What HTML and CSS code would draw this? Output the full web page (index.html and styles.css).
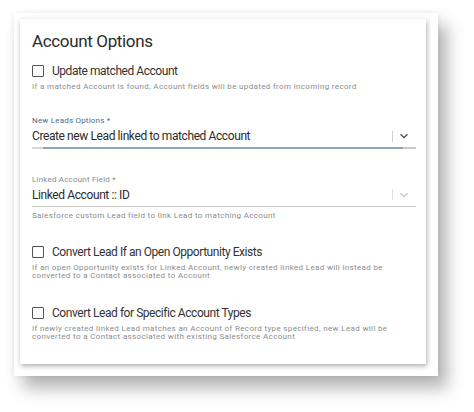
FILE: index.html
```html
<!DOCTYPE html>
<html>
<head>
<meta charset="utf-8">
<link rel="stylesheet" href="styles.css">
</head>
<body>
<div class="frame">
  <div class="card">
    <h1 class="title">Account Options</h1>

    <div class="check-row row-1">
      <span class="box"></span>
      <span class="check-label">Update matched Account</span>
    </div>
    <div class="help help-1">If a matched Account is found, Account fields will be updated from incoming record</div>

    <div class="field field-1 focused">
      <div class="field-label">New Leads Options *</div>
      <div class="field-control">
        <span class="field-value">Create new Lead linked to matched Account</span>
        <span class="sep"></span>
        <svg class="chev" width="10" height="6" viewBox="0 0 10 6"><path d="M1.5 1.2 L5 4.6 L8.5 1.2" fill="none" stroke-width="1.4"/></svg>
      </div>
    </div>

    <div class="field field-2">
      <div class="field-label">Linked Account Field *</div>
      <div class="field-control">
        <span class="field-value">Linked Account :: ID</span>
        <span class="sep"></span>
        <svg class="chev" width="10" height="6" viewBox="0 0 10 6"><path d="M1.5 1.2 L5 4.6 L8.5 1.2" fill="none" stroke-width="1.2"/></svg>
      </div>
    </div>
    <div class="help help-2">Salesforce custom Lead field to link Lead to matching Account</div>

    <div class="check-row row-2">
      <span class="box"></span>
      <span class="check-label">Convert Lead If an Open Opportunity Exists</span>
    </div>
    <div class="help help-3">If an open Opportunity exists for Linked Account, newly created linked Lead will instead be<br>converted to a Contact associated to Account</div>

    <div class="check-row row-3">
      <span class="box"></span>
      <span class="check-label">Convert Lead for Specific Account Types</span>
    </div>
    <div class="help help-4">If newly created linked Lead matches an Account of Record type specified, new Lead will be<br>converted to a Contact associated with existing Salesforce Account</div>
  </div>
</div>
</body>
</html>
```

FILE: styles.css
```css
html, body {
  margin: 0;
  padding: 0;
  background: #ffffff;
}

body {
  width: 474px;
  height: 412px;
  overflow: hidden;
  font-family: Roboto, "Liberation Sans", sans-serif;
}

.frame {
  margin: 13px 0 0 14px;
  width: 412px;
  height: 351px;
  padding: 6px;
  background: #ffffff;
  box-shadow: 9px 12px 16px rgba(0, 0, 0, 0.3), 0 0 5px rgba(0, 0, 0, 0.08);
}

.card {
  width: 406px;
  height: 345px;
  box-sizing: border-box;
  padding: 12px 10px 0 12px;
  background: #ffffff;
  box-shadow: 1px 2px 5px rgba(0, 0, 0, 0.32);
}

.title {
  margin: 0;
  font-size: 17px;
  line-height: 20px;
  font-weight: 400;
  color: #2b2b2b;
  letter-spacing: -0.35px;
}

.check-row {
  display: flex;
  align-items: center;
  height: 14px;
  gap: 8px;
}

.row-1 { margin-top: 13px; }
.row-2 { margin-top: 25px; }
.row-3 { margin-top: 26px; }

.box {
  width: 12px;
  height: 12px;
  box-sizing: border-box;
  border: 1.5px solid #555555;
  border-radius: 1px;
  flex: none;
}

.check-label {
  font-size: 12px;
  line-height: 14px;
  color: #333333;
  letter-spacing: -0.45px;
}

.help {
  margin-top: 5px;
  font-size: 8px;
  line-height: 8px;
  color: #8c8c8c;
  letter-spacing: 0.35px;
  white-space: nowrap;
}

.field {
  display: flex;
  flex-direction: column;
}

.field-1 { margin-top: 25px; }
.field-2 { margin-top: 25.5px; }

.field-label {
  font-size: 8px;
  line-height: 9px;
  color: #8c8c8c;
  letter-spacing: 0.2px;
}

.field-1 .field-label { color: #3f6f92; }

.field-control {
  display: flex;
  align-items: center;
  margin-top: 3px;
  padding-bottom: 3px;
  border-bottom: 1px solid #c9c9c9;
}

.field-1 .field-control {
  border-bottom: 2px solid #8fa7b1;
  border-image: linear-gradient(90deg, #d6d6d6 0, #d6d6d6 12px, #8fa7b1 12px, #8fa7b1 370px, #c9c9c9 370px) 1;
}

.field-value {
  flex: 1;
  font-size: 12px;
  line-height: 16px;
  color: #2b2b2b;
  letter-spacing: -0.4px;
}

.sep {
  width: 1px;
  height: 11px;
  background: #cfcfcf;
  margin-right: 6px;
}

.chev {
  margin-right: 7px;
  stroke: #555555;
}

.field-2 .chev { stroke: #c4c4c4; }
.field-2 .sep { background: #e0e0e0; }
```
